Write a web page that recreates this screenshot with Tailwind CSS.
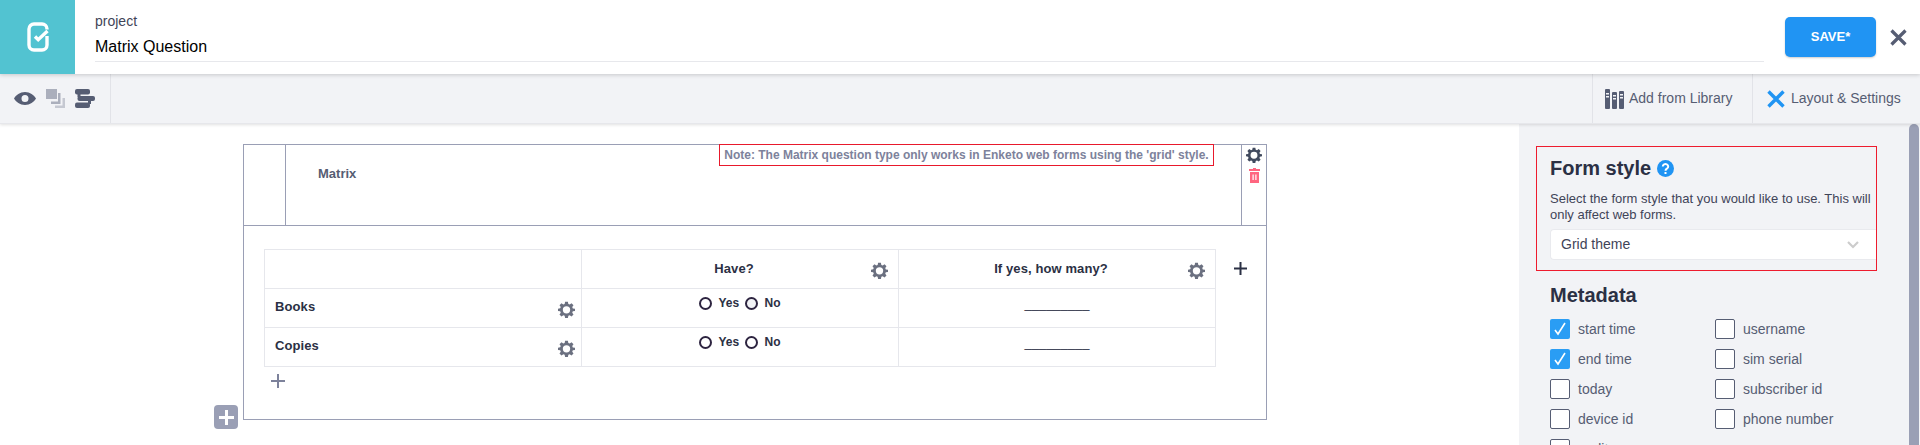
<!DOCTYPE html>
<html>
<head>
<meta charset="utf-8">
<script src="https://cdn.jsdelivr.net/npm/@tailwindcss/browser@4"></script>
</head>
<body class="m-0 h-[445px] w-[1920px] overflow-hidden bg-white font-['Liberation_Sans',Arial,sans-serif] text-[#2b3044]">
<svg width="0" height="0" class="absolute"><defs>
<symbol id="gear" viewBox="0 0 24 24"><path fill="currentColor" fill-rule="evenodd" d="M10 1h4l.6 3.100 1.900.8 2.600-1.800 2.800 2.900-1.800 2.600.8 1.900L24 11v3l-3.100.6-.8 1.900 1.800 2.600-2.800 2.800-2.600-1.800-1.900.8L14 24h-4l-.6-3.100-1.900-.8-2.600 1.800-2.800-2.800 1.800-2.600-.8-1.900L0 14v-3l3.100-.6.8-1.900L2.100 5.900 4.900 3.100l2.600 1.800 1.900-.8zM12 7.300a5.200 5.200 0 1 0 0 10.400 5.200 5.200 0 0 0 0-10.400z"/></symbol>
</defs></svg>

<header class="relative z-20 flex h-[74px] bg-white shadow-[0_1px_4px_rgba(0,0,0,0.18)]">
  <div class="flex w-[75px] shrink-0 items-center justify-center bg-[#52c3d1]">
    <svg width="22" height="30" viewBox="0 0 22 30" fill="none"><path d="M20 7.500V7A5 5 0 0 0 15 2H7A5 5 0 0 0 2 7v16a5 5 0 0 0 5 5h8a5 5 0 0 0 5-5v-9" stroke="#fff" stroke-width="3.400"/><path d="M8 14.500l3.200 3.200L20.500 9" stroke="#fff" stroke-width="3.400"/></svg>
  </div>
  <div class="ml-[20px] flex w-[1669px] flex-col">
    <div class="mt-[13px] h-[16px] text-[14px] leading-[16px] text-[#3f4458]">project</div>
    <div class="mt-[7px] h-[25px] text-[16px] leading-[22px] text-black">Matrix Question</div>
    <div class="h-px bg-[#e7e8ec]"></div>
  </div>
  <div class="ml-[21px] mt-[17px] flex h-[40px] w-[91px] items-center justify-center rounded-[5px] bg-[#2094f3] text-[13px] font-bold text-white shadow-[0_1px_2px_rgba(0,0,0,0.2)]">SAVE*</div>
  <svg class="ml-[14px] mt-[29px]" width="17" height="17" viewBox="0 0 17 17"><path d="M1.500 1.500l14 14M15.500 1.500l-14 14" stroke="#565d73" stroke-width="3.200"/></svg>
</header>

<nav class="relative z-10 flex h-[50px] items-stretch border-b border-[#e6e7eb] bg-[#f2f3f6] shadow-[0_1px_3px_rgba(0,0,0,0.12)]">
  <div class="flex w-[111px] items-center border-r border-[#e2e3e8] pl-[14px]">
    <svg width="22" height="13" viewBox="0 0 22 13"><path fill="#565d73" fill-rule="evenodd" d="M11 0c5 0 9 3 11 6.500-2 3.500-6 6.500-11 6.500S2 10 0 6.500C2 3 6 0 11 0zm0 3a3.500 3.500 0 1 0 0 7 3.500 3.500 0 0 0 0-7z"/></svg>
    <svg class="ml-[10px]" width="19" height="19" viewBox="0 0 19 19"><path fill="#abafbc" d="M0 0h11v10H0z"/><path fill="#abafbc" d="M12 4h2.500v11H5v-2.500h7z"/><path fill="#c5c8d1" d="M16.500 9H19v10H9v-2.500h7.500z"/></svg>
    <svg class="ml-[10px]" width="20" height="19" viewBox="0 0 20 19"><g fill="#565d73"><rect x="0" y="0" width="15" height="5.500" rx="2"/><rect x="2.500" y="7" width="17.500" height="5" rx="2"/><rect x="0" y="13.500" width="15" height="5.500" rx="2"/><rect x="2.500" y="4" width="3" height="4"/><rect x="13" y="11" width="3" height="4"/></g></svg>
  </div>
  <div class="flex-1"></div>
  <div class="flex w-[160px] items-center border-l border-[#e2e3e8] pl-[12px] text-[14px] text-[#565d73]">
    <svg width="19" height="20" viewBox="0 0 19 20"><g fill="#565d73"><rect x="0" y="0" width="5" height="20" rx="1"/><rect x="7" y="3" width="5" height="17" rx="1"/><rect x="14" y="2" width="5" height="18" rx="1"/></g><g fill="#f2f3f6"><rect x="1" y="4" width="3" height="1.500"/><rect x="1" y="7" width="3" height="1.500"/><rect x="8" y="6" width="3" height="1.500"/><rect x="8" y="9" width="3" height="1.500"/><rect x="15" y="5" width="3" height="1.500"/><rect x="15" y="8" width="3" height="1.500"/></g></svg>
    <span class="ml-[5px]">Add from Library</span>
  </div>
  <div class="flex w-[168px] items-center border-l border-[#e2e3e8] pl-[14px] text-[14px] text-[#565d73]">
    <svg width="18" height="18" viewBox="0 0 18 18"><path d="M1.500 1.500l15 15M16.500 1.500l-15 15" stroke="#2094f3" stroke-width="3.400"/></svg>
    <span class="ml-[6px]">Layout &amp; Settings</span>
  </div>
</nav>

<main class="flex h-[321px]">
  <section class="relative w-[1519px] shrink-0">
    <div class="absolute left-[243px] top-[20px] h-[276px] w-[1024px] border border-[#9a9fb5]">
      <div class="flex h-[81px] border-b border-[#9a9fb5]">
        <div class="w-[42px] shrink-0 border-r border-[#9a9fb5]"></div>
        <div class="relative flex-1">
          <div class="pl-[32px] pt-[22px] text-[13px] font-bold leading-[14px] text-[#565d73]">Matrix</div>
          <div class="absolute right-[27px] top-[-1px] flex h-[22px] w-[495px] items-center justify-center border border-[#e8192c] text-[12px] font-bold text-[#7d829b]">Note: The Matrix question type only works in Enketo web forms using the 'grid' style.</div>
        </div>
        <div class="flex w-[25px] shrink-0 flex-col items-center border-l border-[#9a9fb5] pt-[2px]">
          <svg width="16" height="16" class="text-[#414a5e]"><use href="#gear"/></svg>
          <svg class="mt-[5px]" width="11" height="15" viewBox="0 0 11 15"><path fill="#ff6680" d="M4 0h3v1h4v2H0V1h4zM1 4h9v11H1zm2.500 2.500v5.500h1.200V6.500zm2.800 0v5.500h1.200V6.500z"/></svg>
        </div>
      </div>
      <div class="relative px-[20px] pt-[23px]">
        <div class="relative grid w-[952px] grid-cols-[317px_317px_316px] grid-rows-[39px_39px_38px] border border-[#e6e7ec] text-[13px] font-bold tracking-[0.1px]">
          <div class="border-b border-r border-[#e6e7ec]"></div>
          <div class="relative flex items-center justify-center border-b border-r border-[#e6e7ec] pr-[12px]"><span>Have?</span><svg width="17" height="17" class="absolute right-[10px] top-[12px] text-[#6b7080]"><use href="#gear"/></svg></div>
          <div class="relative flex items-center justify-center border-b border-[#e6e7ec] pr-[12px]"><span>If yes, how many?</span><svg width="17" height="17" class="absolute right-[10px] top-[12px] text-[#6b7080]"><use href="#gear"/></svg></div>

          <div class="relative border-b border-r border-[#e6e7ec] pl-[10px] pt-[11px] leading-[14px]">Books<svg width="17" height="17" class="absolute right-[6px] top-[12px] text-[#6b7080]"><use href="#gear"/></svg></div>
          <div class="flex items-start justify-center gap-[6px] border-b border-r border-[#e6e7ec] pt-[7px] text-[12px] leading-[14px]"><span class="flex items-center gap-[6px]"><i class="block h-[13px] w-[13px] rounded-full border-2 border-[#2d2440] bg-white"></i>Yes</span><span class="flex items-center gap-[6px]"><i class="block h-[13px] w-[13px] rounded-full border-2 border-[#2d2440] bg-[#f2f3f6]"></i>No</span></div>
          <div class="flex justify-center border-b border-[#e6e7ec] pt-[8px] text-[13px] font-normal leading-[14px] tracking-normal">_________</div>

          <div class="relative border-r border-[#e6e7ec] pl-[10px] pt-[11px] leading-[14px]">Copies<svg width="17" height="17" class="absolute right-[6px] top-[12px] text-[#6b7080]"><use href="#gear"/></svg></div>
          <div class="flex items-start justify-center gap-[6px] border-r border-[#e6e7ec] pt-[7px] text-[12px] leading-[14px]"><span class="flex items-center gap-[6px]"><i class="block h-[13px] w-[13px] rounded-full border-2 border-[#2d2440] bg-white"></i>Yes</span><span class="flex items-center gap-[6px]"><i class="block h-[13px] w-[13px] rounded-full border-2 border-[#2d2440] bg-white"></i>No</span></div>
          <div class="flex justify-center pt-[8px] text-[13px] font-normal leading-[14px] tracking-normal">_________</div>

          <svg class="absolute left-[969px] top-[12px]" width="13" height="13" viewBox="0 0 13 13"><path d="M6.500 0v13M0 6.500h13" stroke="#2b3044" stroke-width="2"/></svg>
          <svg class="absolute left-[6px] top-[124px]" width="14" height="14" viewBox="0 0 14 14"><path d="M7 0v14M0 7h14" stroke="#7d829b" stroke-width="2"/></svg>
        </div>
      </div>
    </div>
    <div class="absolute left-[214px] top-[281px] flex h-[24px] w-[24px] items-center justify-center rounded-[4px] bg-[#9a9fb5]">
      <svg width="15" height="15" viewBox="0 0 15 15"><path d="M7.500 0v15M0 7.500h15" stroke="#fff" stroke-width="3"/></svg>
    </div>
  </section>

  <aside class="relative w-[390px] shrink-0 bg-[#f2f3f6]">
    <div class="absolute left-[17px] top-[22px] h-[125px] w-[341px] border border-[#ee1c2e]"></div>
    <div class="pl-[31px] pt-[31px]">
      <div class="flex items-center text-[20px] font-bold leading-[26px] text-[#2b3044]">Form style
        <svg class="ml-[6px]" width="17" height="17" viewBox="0 0 17 17"><circle cx="8.500" cy="8.500" r="8.500" fill="#2094f3"/><path d="M5.800 6.500a2.700 2.400 0 1 1 4.200 2c-1 .7-1.500 1-1.500 2.200" fill="none" stroke="#fff" stroke-width="2"/><rect x="7.500" y="12" width="2" height="2" fill="#fff"/></svg>
      </div>
      <p class="mt-[10px] w-[325px] text-[13px] leading-[16px] text-[#3f4458]">Select the form style that you would like to use. This will only affect web forms.</p>
      <div class="mt-[6px] flex h-[31px] w-[326px] items-center justify-between rounded-l-[4px] border border-r-0 border-[#e9eaee] bg-white pl-[10px] pr-[17px] text-[14px] text-[#3f4458]">
        <span>Grid theme</span>
        <svg width="12" height="8" viewBox="0 0 12 8"><path d="M1 1l5 5 5-5" fill="none" stroke="#ccc" stroke-width="2.200"/></svg>
      </div>
      <div class="mt-[22px] text-[20px] font-bold leading-[26px] text-[#2b3044]">Metadata</div>
      <div class="mt-[11px] grid w-[330px] grid-cols-[165px_165px] gap-y-[10px] text-[14px] leading-[20px] text-[#565d73]">
        <label class="flex h-[20px] items-center gap-[8px]"><span class="flex h-[20px] w-[20px] items-center justify-center rounded-[2px] bg-[#2a9df4]"><svg width="14" height="14" viewBox="0 0 14 14"><path d="M2 8l3 4 7-11" fill="none" stroke="#fff" stroke-width="1.600"/></svg></span>start time</label>
        <label class="flex h-[20px] items-center gap-[8px]"><span class="h-[20px] w-[20px] rounded-[2px] border border-[#565d73] bg-white"></span>username</label>
        <label class="flex h-[20px] items-center gap-[8px]"><span class="flex h-[20px] w-[20px] items-center justify-center rounded-[2px] bg-[#2a9df4]"><svg width="14" height="14" viewBox="0 0 14 14"><path d="M2 8l3 4 7-11" fill="none" stroke="#fff" stroke-width="1.600"/></svg></span>end time</label>
        <label class="flex h-[20px] items-center gap-[8px]"><span class="h-[20px] w-[20px] rounded-[2px] border border-[#565d73] bg-white"></span>sim serial</label>
        <label class="flex h-[20px] items-center gap-[8px]"><span class="h-[20px] w-[20px] rounded-[2px] border border-[#565d73] bg-white"></span>today</label>
        <label class="flex h-[20px] items-center gap-[8px]"><span class="h-[20px] w-[20px] rounded-[2px] border border-[#565d73] bg-white"></span>subscriber id</label>
        <label class="flex h-[20px] items-center gap-[8px]"><span class="h-[20px] w-[20px] rounded-[2px] border border-[#565d73] bg-white"></span>device id</label>
        <label class="flex h-[20px] items-center gap-[8px]"><span class="h-[20px] w-[20px] rounded-[2px] border border-[#565d73] bg-white"></span>phone number</label>
        <label class="flex h-[20px] items-center gap-[8px]"><span class="h-[20px] w-[20px] rounded-[2px] border border-[#565d73] bg-white"></span>audit</label>
      </div>
    </div>
  </aside>
  <div class="w-[11px] shrink-0 bg-[#f2f3f6]"><div class="h-full w-[10px] rounded-t-full bg-[#9a9fb5]"></div></div>
</main>
</body>
</html>
